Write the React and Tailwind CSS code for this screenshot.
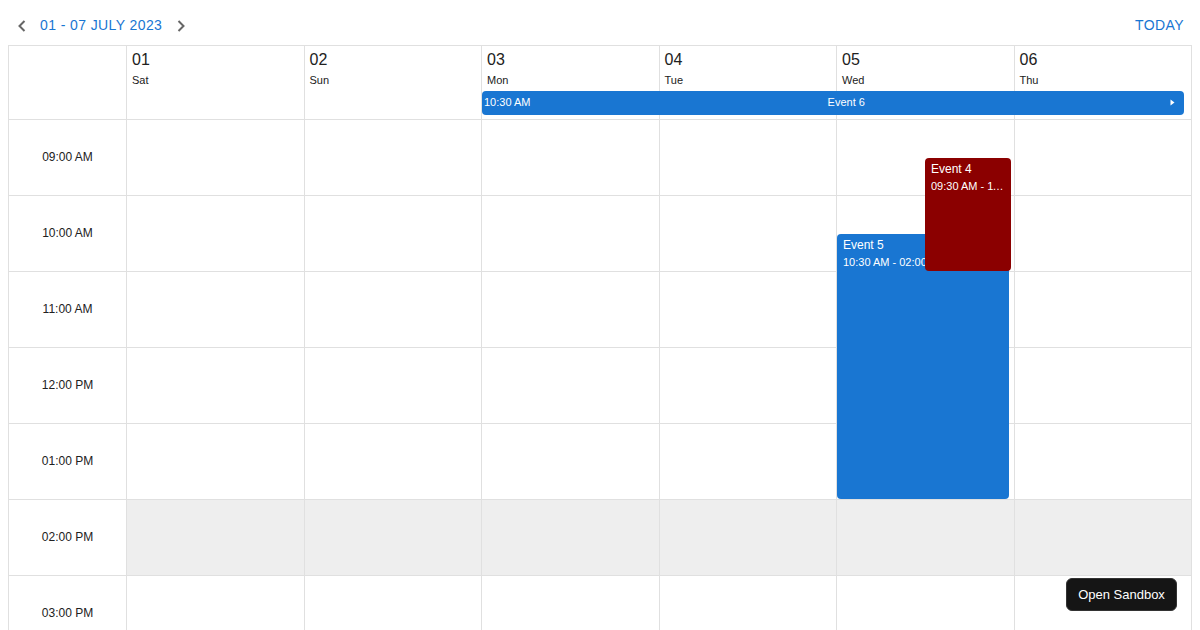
import React from "react";

const days = [
  { num: "01", name: "Sat" },
  { num: "02", name: "Sun" },
  { num: "03", name: "Mon" },
  { num: "04", name: "Tue" },
  { num: "05", name: "Wed" },
  { num: "06", name: "Thu" },
];

const hours = [
  "09:00 AM",
  "10:00 AM",
  "11:00 AM",
  "12:00 PM",
  "01:00 PM",
  "02:00 PM",
  "03:00 PM",
];

const App = () => {
  return (
    <div className="min-h-screen bg-white px-2 font-['Liberation_Sans',Arial,sans-serif] text-[#212121]">
      {/* toolbar */}
      <div className="flex h-[45px] items-center justify-between pt-[6px]">
        <div className="flex items-center">
          <button className="flex h-6 w-6 items-center justify-center ml-[2px] text-[#666]">
            <svg width="10" height="14" viewBox="0 0 10 14">
              <path d="M7.5 2 L2.5 7 L7.5 12" fill="none" stroke="currentColor" strokeWidth="2" />
            </svg>
          </button>
          <span className="ml-[6px] text-[14px] tracking-[0.4px] text-[#1976d2]">01 - 07 JULY 2023</span>
          <button className="ml-[7px] flex h-6 w-6 items-center justify-center text-[#666]">
            <svg width="10" height="14" viewBox="0 0 10 14">
              <path d="M2.5 2 L7.5 7 L2.5 12" fill="none" stroke="currentColor" strokeWidth="2" />
            </svg>
          </button>
        </div>
        <button className="mr-2 text-[14px] tracking-[0.4px] text-[#1976d2]">TODAY</button>
      </div>

      {/* header row */}
      <div className="relative border-l border-t border-[#e0e0e0]">
        <div className="grid grid-cols-[118px_repeat(6,1fr)]">
          <div className="h-[74px] border-b border-r border-[#e0e0e0]" />
          {days.map((d) => (
            <div key={d.num} className="h-[74px] border-b border-r border-[#e0e0e0] pl-[5px] pt-[3px]">
              <div className="text-[16px] leading-[22px]">{d.num}</div>
              <div className="mt-[2px] text-[11px] leading-[14px]">{d.name}</div>
            </div>
          ))}
        </div>
        <div className="absolute left-[473px] top-[45px] flex h-6 w-[702px] items-center rounded bg-[#1976d2] pb-[1px] pl-[2px] pr-[9px] text-[11px] text-white">
          <span>10:30 AM</span>
          <span className="mr-[8px] flex-1 text-center">Event 6</span>
          <svg width="5" height="7" viewBox="0 0 5 7">
            <path d="M0.5 0.5 L4.5 3.5 L0.5 6.5 Z" fill="white" />
          </svg>
        </div>

        {/* body */}
        <div className="relative">
          <div className="grid grid-cols-[118px_repeat(6,1fr)]">
            {hours.map((h, i) => (
              <React.Fragment key={h}>
                <div className="flex h-[76px] items-center justify-center border-b border-r border-[#e0e0e0] pb-[2px] text-[12px]">
                  {h}
                </div>
                {days.map((d) => (
                  <div
                    key={d.num + h}
                    className={
                      i === 5
                        ? "h-[76px] border-b border-r border-[#e0e0e0] bg-[#eeeeee]"
                        : "h-[76px] border-b border-r border-[#e0e0e0]"
                    }
                  />
                ))}
              </React.Fragment>
            ))}
          </div>

          <div className="absolute left-[828px] top-[114px] h-[265px] w-[172px] overflow-hidden rounded bg-[#1976d2] px-[6px] pt-[3px] text-white">
            <div className="text-[12px] leading-[16px]">Event 5</div>
            <div className="mt-[2px] whitespace-nowrap text-[11px] leading-[14px]">10:30 AM - 02:00 PM</div>
          </div>

          <div className="absolute left-[916px] top-[38px] h-[113px] w-[86px] overflow-hidden rounded bg-[#8b0000] px-[6px] pt-[3px] text-white">
            <div className="text-[12px] leading-[16px]">Event 4</div>
            <div className="mt-[2px] truncate text-[11px] leading-[14px]">09:30 AM - 11:00 AM</div>
          </div>
        </div>
      </div>

      <button className="fixed bottom-[19px] right-[23px] h-[33px] w-[111px] rounded-md border border-[#333] bg-[#151515] text-[13px] text-white">
        Open Sandbox
      </button>
    </div>
  );
};

export default App;
